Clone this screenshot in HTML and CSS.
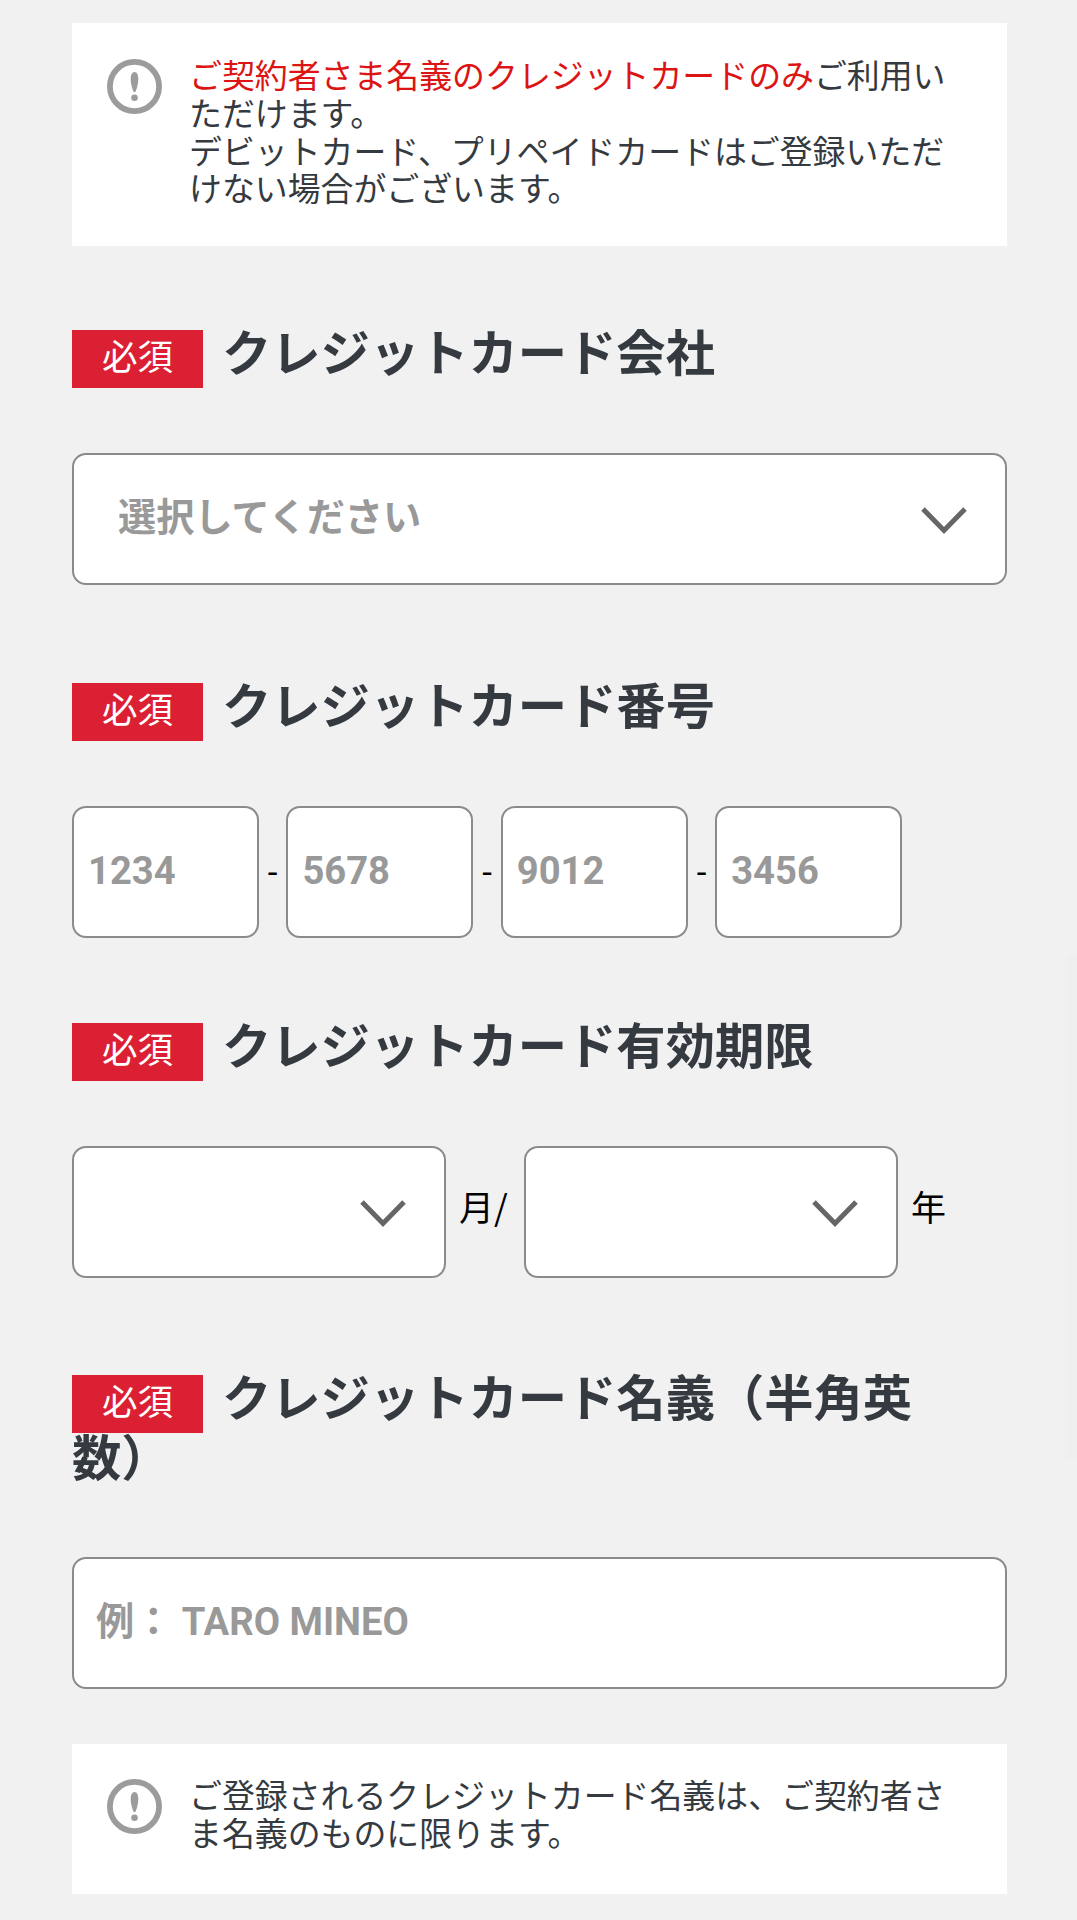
FILE: index.html
```html
<!DOCTYPE html>
<html lang="ja">
	<head>
		<meta charset="UTF-8">
		<meta name="viewport" content="width=device-width, initial-scale=1.0">
		<title>クレジットカード情報</title>
		<link rel="stylesheet" href="styles.css">
	</head>

	<body>
		<form class="card-form">
			<div class="note">
				<svg class="note-icon" viewBox="0 0 55 55">
					<circle cx="27.5" cy="27.5" r="24.6" fill="none" stroke="#9c9c9c" stroke-width="5.8"/>
					<path d="M27.5 13c2.4 0 3.8 3 3.8 7 0 5-1.600 10-3 13h-1.600c-1.400-3-3-8-3-13 0-4 1.400-7 3.800-7z" fill="#9c9c9c"/>
					<circle cx="27.5" cy="38.700" r="3.300" fill="#9c9c9c"/>
				</svg>
				<p class="note-text"><span class="red">ご契約者さま名義のクレジットカードのみ</span>ご利用いただけます。<br>デビットカード、プリペイドカードはご登録いただけない場合がございます。</p>
			</div>

			<div class="field company">
				<h2><span class="required">必須</span>クレジットカード会社</h2>
				<div class="select-box">
					<select>
						<option>選択してください</option>
					</select>
					<svg class="arrow" viewBox="0 0 46 28"><path d="M2 2l21 21.500L44 2" fill="none" stroke="#666" stroke-width="5"/></svg>
				</div>
			</div>

			<div class="field number">
				<h2><span class="required">必須</span>クレジットカード番号</h2>
				<div class="number-row">
					<input type="text" placeholder="1234">
					<span class="dash">-</span>
					<input type="text" placeholder="5678">
					<span class="dash">-</span>
					<input type="text" placeholder="9012">
					<span class="dash">-</span>
					<input type="text" placeholder="3456">
				</div>
			</div>

			<div class="field expiry">
				<h2><span class="required">必須</span>クレジットカード有効期限</h2>
				<div class="expiry-row">
					<div class="select-box">
						<select></select>
						<svg class="arrow" viewBox="0 0 46 28"><path d="M2 2l21 21.500L44 2" fill="none" stroke="#666" stroke-width="5"/></svg>
					</div>
					<span class="unit month">月/</span>
					<div class="select-box">
						<select></select>
						<svg class="arrow" viewBox="0 0 46 28"><path d="M2 2l21 21.500L44 2" fill="none" stroke="#666" stroke-width="5"/></svg>
					</div>
					<span class="unit">年</span>
				</div>
			</div>

			<div class="field holder">
				<h2><span class="required">必須</span>クレジットカード名義（半角英<br>数）</h2>
				<input type="text" placeholder="例： TARO MINEO">
			</div>

			<div class="note note-bottom">
				<svg class="note-icon" viewBox="0 0 55 55">
					<circle cx="27.5" cy="27.5" r="24.6" fill="none" stroke="#9c9c9c" stroke-width="5.8"/>
					<path d="M27.5 13c2.4 0 3.8 3 3.8 7 0 5-1.600 10-3 13h-1.600c-1.400-3-3-8-3-13 0-4 1.400-7 3.800-7z" fill="#9c9c9c"/>
					<circle cx="27.5" cy="38.700" r="3.300" fill="#9c9c9c"/>
				</svg>
				<p class="note-text">ご登録されるクレジットカード名義は、ご契約者さま名義のものに限ります。</p>
			</div>
		</form>
		<div class="scrollbar"></div>
	</body>
</html>
```
FILE: styles.css
```css
* {
	box-sizing: border-box;
}

body {
	margin: 0;
	height: 1920px;
	overflow: hidden;
	font-family: "Noto Sans CJK JP", sans-serif;
	color: #353a40;
	background-color: #f1f1f1;
}

.card-form {
	width: 935px;
	margin-left: 72px;
	padding-top: 23px;
}

/* white notice boxes */
.note {
	display: flex;
	align-items: flex-start;
	height: 223px;
	padding: 36px 50px 0 35px;
	background-color: #fff;
}

.note-icon {
	flex: none;
	width: 55px;
	height: 55px;
	margin-right: 27px;
}

.note-text {
	width: 760px;
	margin: -4px 0 0;
	font-size: 32.9px;
	line-height: 37.8px;
}

.red {
	color: #dc1414;
}

.note-bottom {
	height: 150px;
	margin-top: 55px;
	padding-top: 35px;
}

/* headings */
h2 {
	margin: 0 0 73px;
	font-size: 49.3px;
	font-weight: bold;
	line-height: 60px;
}

.required {
	display: inline-block;
	overflow: hidden;
	width: 131px;
	height: 58px;
	margin: 0 19px -8px 0;
	vertical-align: -9px;
	font-size: 35.5px;
	font-weight: normal;
	line-height: 50px;
	text-align: center;
	color: #fff;
	background-color: #da2032;
}

.company {
	margin-top: 74px;
}

.number {
	margin-top: 88px;
}

.expiry {
	margin-top: 75px;
}

.holder {
	margin-top: 87px;
}

/* inputs */
input, select {
	display: block;
	width: 100%;
	height: 132px;
	margin: 0;
	border: 2px solid #8b8b8b;
	border-radius: 14px;
	outline: none;
	appearance: none;
	font-family: Roboto, "Noto Sans CJK JP", sans-serif;
	font-size: 38.2px;
	font-weight: bold;
	color: #999;
	background-color: #fff;
}

input {
	padding: 0 0 2px 22px;
}

input::placeholder {
	color: #999;
	opacity: 1;
}

select {
	padding: 0 100px 2px 44px;
}

.select-box {
	position: relative;
}

.arrow {
	position: absolute;
	top: 54px;
	right: 40px;
	width: 46px;
	height: 28px;
}

.number-row, .expiry-row {
	display: flex;
	align-items: center;
}

.number-row input {
	flex: none;
	width: 187px;
	padding-left: 14px;
}

.dash {
	width: 27.4px;
	font-family: Roboto, sans-serif;
	font-size: 35px;
	text-align: center;
	color: #000;
}

.expiry-row .select-box {
	flex: none;
	width: 374px;
}

.unit {
	margin: 0 0 13px 13px;
	font-size: 35px;
	font-weight: normal;
	color: #000;
}

.month {
	width: 65px;
}

.holder h2 {
	margin-bottom: 72px;
}

.scrollbar {
	position: absolute;
	top: 955px;
	right: 0;
	width: 10px;
	height: 504px;
	background-color: #efefef;
}
```
